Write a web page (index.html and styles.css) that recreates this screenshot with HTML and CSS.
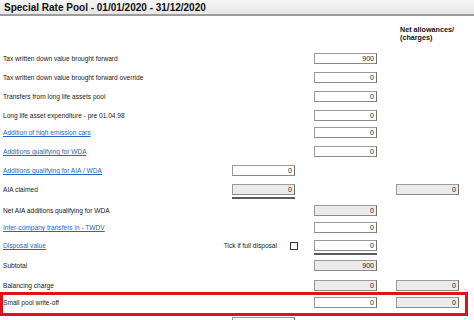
FILE: index.html
```html
<!DOCTYPE html>
<html>
<head>
<meta charset="utf-8">
<link rel="stylesheet" href="styles.css">
</head>
<body>
<div class="page">
  <div class="titlebar"><span class="title">Special Rate Pool - 01/01/2020 - 31/12/2020</span></div>

  <div class="row headrow">
    <div class="colhead">Net allowances/<br>(charges)</div>
  </div>

  <div class="row h19">
    <div class="label">Tax written down value brought forward</div>
    <div class="c3"><div class="box">900</div></div>
  </div>
  <div class="row h19">
    <div class="label">Tax written down value brought forward override</div>
    <div class="c3"><div class="box">0</div></div>
  </div>
  <div class="row h19">
    <div class="label">Transfers from long life assets pool</div>
    <div class="c3"><div class="box">0</div></div>
  </div>
  <div class="row h17">
    <div class="label">Long life asset expenditure - pre 01.04.98</div>
    <div class="c3"><div class="box">0</div></div>
  </div>
  <div class="row h19">
    <div class="label"><a class="link" href="#">Addition of high emission cars</a></div>
    <div class="c3"><div class="box">0</div></div>
  </div>
  <div class="row h19">
    <div class="label"><a class="link" href="#">Additions qualifying for WDA</a></div>
    <div class="c3"><div class="box">0</div></div>
  </div>
  <div class="row h19">
    <div class="label"><a class="link" href="#">Additions qualifying for AIA / WDA</a></div>
    <div class="c2"><div class="box">0</div></div>
  </div>
  <div class="row h21">
    <div class="label">AIA claimed</div>
    <div class="c2"><div class="ul"><div class="box grey">0</div></div></div>
    <div class="c6"><div class="box grey">0</div></div>
  </div>
  <div class="row h17">
    <div class="label">Net AIA additions qualifying for WDA</div>
    <div class="c3"><div class="box grey">0</div></div>
  </div>
  <div class="row h18">
    <div class="label"><a class="link" href="#">Inter-company transfers in - TWDV</a></div>
    <div class="c3"><div class="box">0</div></div>
  </div>
  <div class="row h20">
    <div class="label split">
      <a class="link" href="#">Disposal value</a>
      <span class="tick"><span class="ticktext">Tick if full disposal</span><span class="checkbox"></span></span>
    </div>
    <div class="c3"><div class="ul"><div class="box">0</div></div></div>
  </div>
  <div class="row h20">
    <div class="label">Subtotal</div>
    <div class="c3"><div class="box grey">900</div></div>
  </div>
  <div class="row h16">
    <div class="label">Balancing charge</div>
    <div class="c3"><div class="box grey">0</div></div>
    <div class="c6"><div class="box grey">0</div></div>
  </div>
  <div class="row highlight">
    <div class="label">Small pool write-off</div>
    <div class="c3"><div class="box">0</div></div>
    <div class="c6"><div class="box grey">0</div></div>
  </div>
  <div class="row h19 tail">
    <div class="label"></div>
    <div class="c2"><div class="box"></div></div>
  </div>
</div>
</body>
</html>
```

FILE: styles.css
```css
html, body {
  margin: 0;
  padding: 0;
  background: #ffffff;
}
body {
  width: 474px;
  height: 320px;
  overflow: hidden;
  font-family: "Liberation Sans", Arial, sans-serif;
  color: #1a1a1a;
}
.page {
  width: 474px;
}
.titlebar {
  height: 14px;
  border-bottom: 2px solid #9c9c9c;
  background: linear-gradient(#f6f6f6, #e6e6e6);
  display: flex;
  align-items: center;
  padding-left: 4px;
}
.title {
  font-size: 10px;
  font-weight: bold;
  color: #111;
  line-height: 12px;
  padding-top: 1px;
}
.row {
  display: grid;
  grid-template-columns: 232px 63px 19px 63px 19px 63px;
  align-items: start;
  font-size: 6.6px;
}
.headrow {
  height: 33px;
}
.colhead {
  grid-column: 6;
  font-weight: bold;
  font-size: 7.2px;
  line-height: 8px;
  padding-top: 10px;
  padding-left: 4px;
  white-space: nowrap;
  color: #111;
}
.h16 { height: 16px; }
.h17 { height: 17px; }
.h18 { height: 18px; }
.h19 { height: 19px; }
.h20 { height: 20px; }
.h21 { height: 21px; }
.label {
  grid-column: 1;
  margin-top: 4px;
  height: 11px;
  line-height: 11px;
  padding-left: 3px;
  white-space: nowrap;
}
.label.split {
  grid-column: 1 / 3;
  display: flex;
  align-items: center;
  margin-right: -3px;
}
.tick {
  margin-left: auto;
  display: flex;
  align-items: center;
}
.ticktext {
  margin-right: 13px;
}
.checkbox {
  width: 8px;
  height: 8px;
  box-sizing: border-box;
  border: 1px solid #333;
  background: #fff;
}
.link {
  color: #2a66c0;
  text-decoration: underline;
}
.c2 { grid-column: 2; }
.c3 { grid-column: 4; }
.c6 { grid-column: 6; }
.c2, .c3, .c6 {
  margin-top: 4px;
}
.box {
  box-sizing: border-box;
  height: 11px;
  border: 1px solid #9a9a9a;
  border-right-color: #6e6e6e;
  border-bottom-color: #8a8a8a;
  background: #ffffff;
  text-align: right;
  padding-right: 2px;
  font-size: 7px;
  line-height: 9px;
  color: #222;
}
.box.grey {
  background: #ebebeb;
}
.ul {
  padding-bottom: 2px;
  border-bottom: 2px solid #5a5a5a;
}
.highlight {
  box-sizing: border-box;
  width: 468px;
  height: 24px;
  border: 3px solid #e0111b;
  grid-template-columns: 229px 63px 19px 63px 19px 63px;
}
.highlight .label {
  margin-top: 2px;
  padding-left: 0;
}
.highlight .c3, .highlight .c6 {
  margin-top: 2px;
}
.tail .c2 {
  margin-top: 1px;
}
```
